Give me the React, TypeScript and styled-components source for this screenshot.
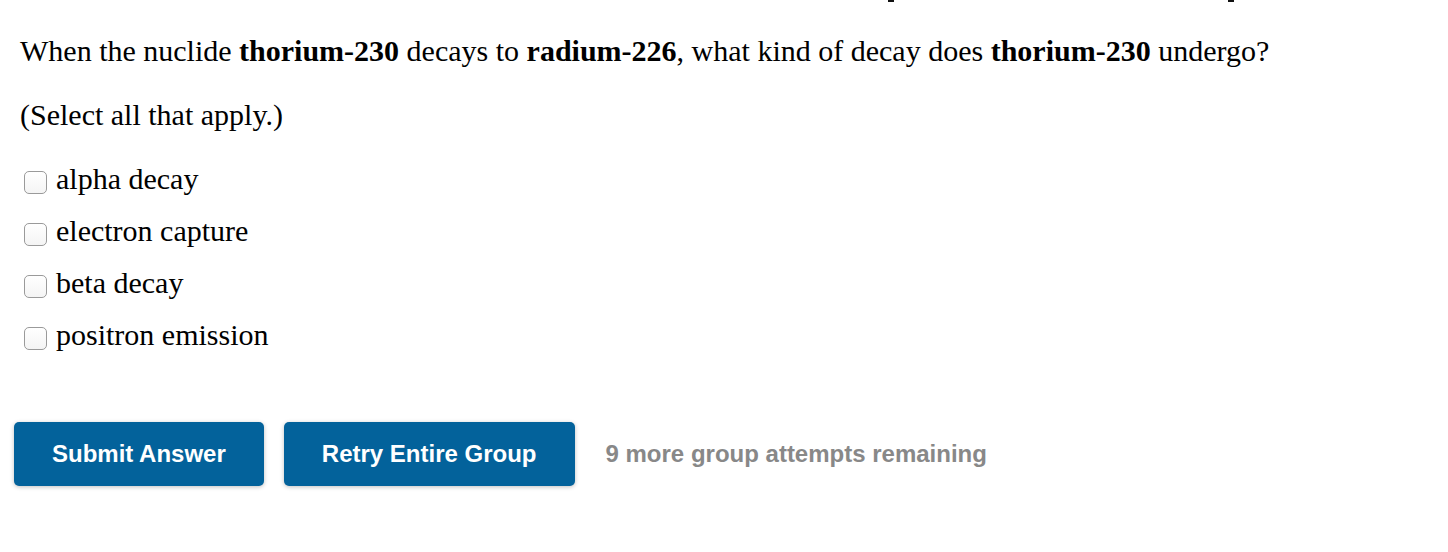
import React from "react";
import styled, { createGlobalStyle } from "styled-components";

const Global = createGlobalStyle`
  html, body { margin: 0; padding: 0; background: #fff; }
  body { font-family: "Liberation Serif", "Times New Roman", serif; color: #000; }
`;

const Page = styled.div`
  width: 1448px;
  height: 552px;
  overflow: hidden;
  background: #fff;
`;

const TopStrip = styled.div`
  display: flex;
  height: 4px;
`;

const Cut = styled.span<{ $left: number }>`
  display: block;
  width: 6px;
  height: 2px;
  margin-left: ${(p) => p.$left}px;
  background: #111;
`;

const Content = styled.div`
  padding: 0 20px;
`;

const Para = styled.p`
  margin: 30px 0 30px;
  font-size: 30px;
  line-height: 34px;
`;

const OptionList = styled.div`
  display: flex;
  flex-direction: column;
  gap: 18px;
  padding-left: 4px;
`;

const OptionRow = styled.label`
  display: flex;
  align-items: flex-start;
  gap: 9px;
  font-size: 30px;
  line-height: 34px;
  height: 34px;
`;

const Box = styled.span`
  box-sizing: border-box;
  width: 23px;
  height: 23px;
  margin-top: 9px;
  border: 1px solid #9a9a9a;
  border-radius: 5px;
  background: linear-gradient(#ffffff, #f4f4f4);
`;

const ButtonRow = styled.div`
  display: flex;
  align-items: center;
  margin-top: 70px;
  padding-left: 14px;
`;

const Button = styled.button`
  box-sizing: border-box;
  height: 64px;
  padding: 0 38px;
  margin-right: 20px;
  border: none;
  border-radius: 5px;
  background: #03629b;
  color: #fff;
  font-family: "Liberation Sans", Arial, sans-serif;
  font-weight: bold;
  font-size: 24px;
  box-shadow: 0 1px 4px rgba(0, 0, 0, 0.25);
`;

const Remaining = styled.span`
  margin-left: 11px;
  font-family: "Liberation Sans", Arial, sans-serif;
  font-weight: bold;
  font-size: 24px;
  color: #888;
`;

const options = ["alpha decay", "electron capture", "beta decay", "positron emission"];

export default function App() {
  return (
    <Page>
      <Global />
      <TopStrip>
        <Cut $left={888} />
        <Cut $left={334} />
      </TopStrip>
      <Content>
        <Para>
          When the nuclide <b>thorium-230</b> decays to <b>radium-226</b>, what kind of decay does{" "}
          <b>thorium-230</b> undergo?
        </Para>
        <Para>(Select all that apply.)</Para>
        <OptionList>
          {options.map((o) => (
            <OptionRow key={o}>
              <Box />
              {o}
            </OptionRow>
          ))}
        </OptionList>
      </Content>
      <ButtonRow>
        <Button>Submit Answer</Button>
        <Button>Retry Entire Group</Button>
        <Remaining>9 more group attempts remaining</Remaining>
      </ButtonRow>
    </Page>
  );
}
